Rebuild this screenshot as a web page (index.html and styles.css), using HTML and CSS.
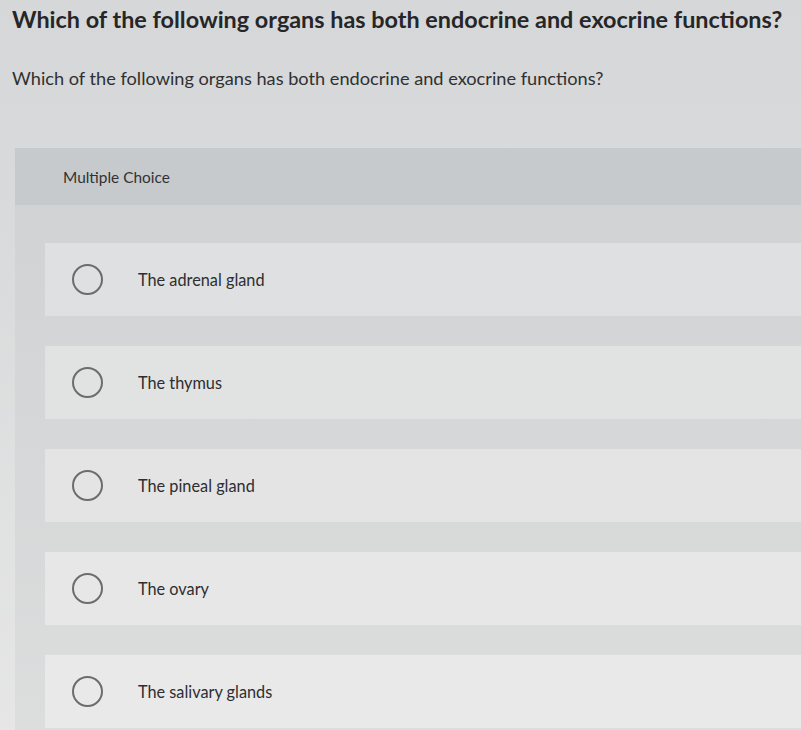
FILE: index.html
```html
<!DOCTYPE html>
<html>
<head>
<meta charset="utf-8">
<link rel="stylesheet" href="styles.css">
</head>
<body>
<div class="page">
  <h1 class="title">Which of the following organs has both endocrine and exocrine functions?</h1>
  <p class="prompt">Which of the following organs has both endocrine and exocrine functions?</p>
  <section class="panel">
    <div class="panel-head">Multiple Choice</div>
    <div class="options">
      <label class="option"><span class="radio"></span><span class="label">The adrenal gland</span></label>
      <label class="option"><span class="radio"></span><span class="label">The thymus</span></label>
      <label class="option"><span class="radio"></span><span class="label">The pineal gland</span></label>
      <label class="option"><span class="radio"></span><span class="label">The ovary</span></label>
      <label class="option"><span class="radio"></span><span class="label">The salivary glands</span></label>
    </div>
  </section>
</div>
</body>
</html>
```
FILE: styles.css
```css
html, body {
  margin: 0;
  padding: 0;
  height: 100%;
  overflow: hidden;
}
body {
  background: linear-gradient(180deg, #d5d7d8 0%, #d8dadb 30%, #e0e1e1 70%, #e6e6e6 100%);
  font-family: Lato, "Liberation Sans", sans-serif;
  color: #2c2c2e;
}
.page {
  display: flex;
  flex-direction: column;
  height: 100%;
}
.title {
  margin: 0;
  padding: 4px 0 0 12px;
  font-size: 23.4px;
  font-weight: 700;
  line-height: 30px;
  color: #262628;
  white-space: nowrap;
}
.prompt {
  margin: 0;
  padding: 33px 0 0 12px;
  font-size: 18.2px;
  line-height: 22px;
  color: #303032;
  white-space: nowrap;
}
.panel {
  margin: 59px 0 0 15px;
  background: linear-gradient(180deg, #cfd1d2 0%, #d4d6d7 40%, #dcdddd 100%);
  flex: 1;
  min-height: 0;
}
.panel-head {
  height: 57px;
  display: flex;
  align-items: center;
  padding-left: 48px;
  background: #c7cacc;
  font-size: 15.4px;
  color: #323234;
}
.options {
  display: flex;
  flex-direction: column;
  gap: 30px;
  padding: 38px 0 0 30px;
}
.option {
  height: 73px;
  display: flex;
  align-items: center;
  padding-left: 27px;
  gap: 35px;
  background: #dfe0e1;
}
.option:nth-child(2) { background: #e1e2e2; }
.option:nth-child(3) { background: #e4e4e4; }
.option:nth-child(4) { background: #e7e7e7; }
.option:nth-child(5) { background: #e9e9e9; }
.radio {
  width: 27px;
  height: 27px;
  border: 2px solid #6c6c6e;
  border-radius: 50%;
  flex: none;
}
.label {
  font-size: 16.3px;
  color: #2e2e30;
}
```
